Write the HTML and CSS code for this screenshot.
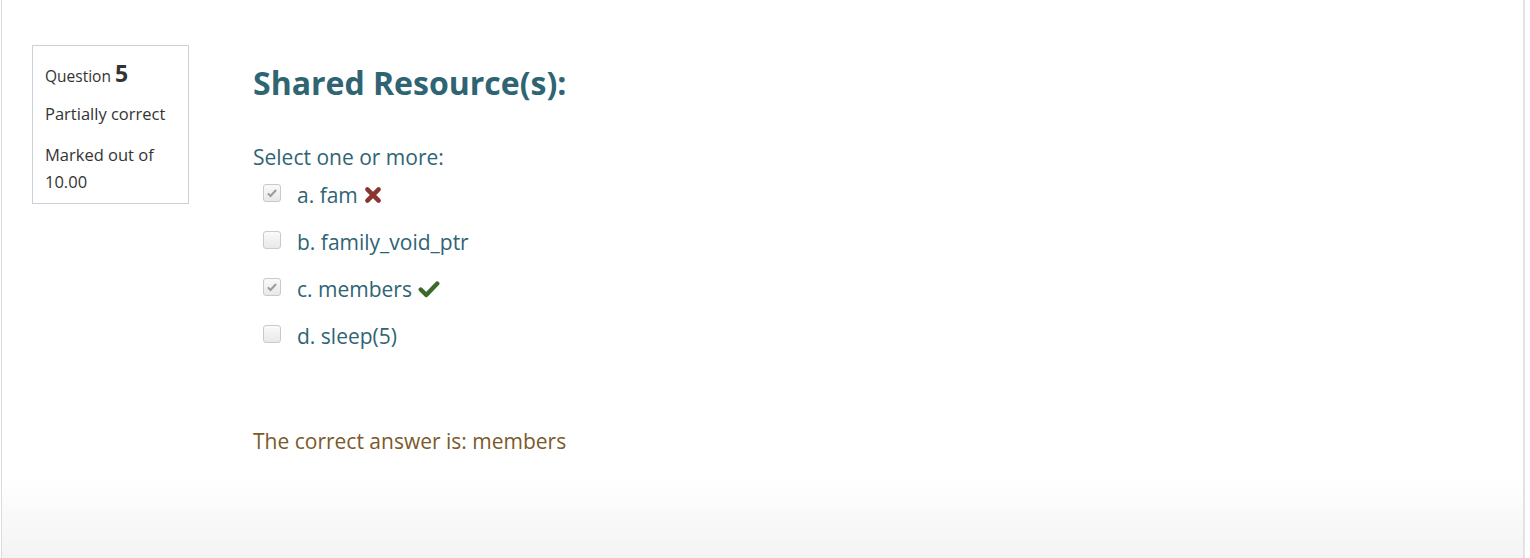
FILE: index.html
```html
<!DOCTYPE html>
<html>
	<head>
		<meta charset="utf-8" />
		<title>Question 5</title>
		<link rel="stylesheet" href="styles.css">
	</head>
	<body>
		<div class="page">
			<div class="que">
				<div class="info">
					<h3 class="no">Question <span class="qno">5</span></h3>
					<div class="state">Partially correct</div>
					<div class="grade">Marked out of 10.00</div>
				</div>
				<div class="content">
					<h2 class="qtext">Shared Resource(s):</h2>
					<div class="prompt">Select one or more:</div>
					<div class="answer">
						<div class="option">
							<span class="box on"><svg viewBox="0 0 16 16" width="12" height="12"><path d="M2.5 8.5l3.5 3.5l7.5-8" fill="none" stroke="#9a9a9a" stroke-width="2.6"/></svg></span>
							<label>a. fam</label>
							<svg class="mark" viewBox="0 0 16 16" width="18" height="18"><path d="M3 3l10 10M13 3L3 13" stroke="#8b3530" stroke-width="4" stroke-linecap="round"/></svg>
						</div>
						<div class="option">
							<span class="box"></span>
							<label>b. family_void_ptr</label>
						</div>
						<div class="option">
							<span class="box on"><svg viewBox="0 0 16 16" width="12" height="12"><path d="M2.5 8.5l3.5 3.5l7.5-8" fill="none" stroke="#9a9a9a" stroke-width="2.6"/></svg></span>
							<label>c. members</label>
							<svg class="mark" viewBox="0 0 20 16" width="22" height="18"><path d="M2.5 8.5l5 5l10-10.5" fill="none" stroke="#3a6b2b" stroke-width="4" stroke-linecap="round" stroke-linejoin="round"/></svg>
						</div>
						<div class="option">
							<span class="box"></span>
							<label>d. sleep(5)</label>
						</div>
					</div>
					<div class="rightanswer">The correct answer is: members</div>
				</div>
			</div>
		</div>
	</body>
</html>
```

FILE: styles.css
```css
*{
	margin:0;
	padding:0;
}
body{
	background:#fff;
	font-family:"Open Sans","Noto Sans",sans-serif;
	color:#2f6473;
	height:558px;
	overflow:hidden;
}
.page{
	margin-left:1px;
	width:1521px;
	height:558px;
	border-left:1px solid #dcdcdc;
	border-right:2px solid #e2e2e2;
	background:linear-gradient(to bottom,#fff 0,#fff 480px,#f3f3f3 558px);
}
.que{
	display:flex;
	align-items:flex-start;
	padding:45px 0 0 30px;
}
.info{
	width:131px;
	border:1px solid #cbd1d9;
	padding:12px 12px 8px;
	color:#333;
}
.no{
	font-weight:normal;
	font-size:15.5px;
	line-height:30px;
	margin-bottom:3px;
}
.qno{
	font-weight:bold;
	font-size:23px;
}
.state{
	font-size:16.5px;
	line-height:40px;
	margin-bottom:7px;
}
.grade{
	font-size:16.5px;
	line-height:27px;
}
.content{
	margin-left:64px;
	padding-top:18px;
}
.qtext{
	font-size:32px;
	font-weight:bold;
	line-height:40px;
	color:#2f6473;
	margin-bottom:40px;
}
.prompt{
	font-size:21px;
	line-height:28px;
}
.option{
	display:flex;
	align-items:center;
	height:47px;
	font-size:21px;
}
.box{
	width:16px;
	height:16px;
	border:1px solid #c9c9c9;
	border-radius:3px;
	background:linear-gradient(#fafafa,#e8e8e8);
	margin:0 16px 0 10px;
	display:flex;
	align-items:center;
	justify-content:center;
	position:relative;
	top:-2px;
}
.mark{
	margin-left:6px;
}
.rightanswer{
	margin-top:68px;
	font-size:21px;
	line-height:28px;
	color:#7b5a2a;
}
```
